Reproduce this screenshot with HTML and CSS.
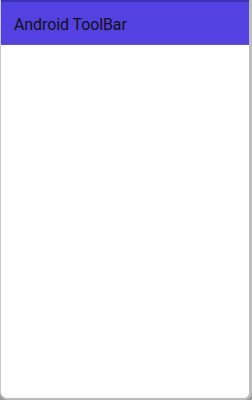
FILE: index.html
```html
<!DOCTYPE html>
<html lang="en">
<head>
    <meta charset="UTF-8">
    <meta name="viewport" content="width=device-width, initial-scale=1.0">
    <title>Android ToolBar</title>
    <link rel="stylesheet" href="styles.css">
</head>
<body>

    <div class="device">
        <div class="toolbar">
            <h1>Android ToolBar</h1>
        </div>
        <div class="content"></div>
    </div>

</body>
</html>
```

FILE: styles.css
```css
* {
    margin: 0;
    padding: 0;
    box-sizing: border-box;
}

body {
    width: 252px;
    height: 400px;
    background: #9a9a9a;
    font-family: Roboto, "Noto Sans", sans-serif;
    overflow: hidden;
}

.device {
    display: flex;
    flex-direction: column;
    width: 252px;
    height: 400px;
    background: #fff;
    border-left: 1px solid #c9c9c9;
    border-right: 3px solid #bdbdbd;
    border-bottom: 2px solid #bcbcbc;
    border-radius: 0 0 8px 8px;
    overflow: hidden;
}

.toolbar {
    height: 45px;
    background: #5441e2;
    border-top: 2px solid #3a32b6;
    border-bottom: 1px solid #5d52e4;
    display: flex;
    align-items: center;
    padding-left: 13px;
}

.toolbar h1 {
    font-size: 16px;
    font-weight: 400;
    letter-spacing: -0.1px;
    color: #111;
    padding-top: 2px;
}

.content {
    flex: 1;
    background: #fff;
}
```
